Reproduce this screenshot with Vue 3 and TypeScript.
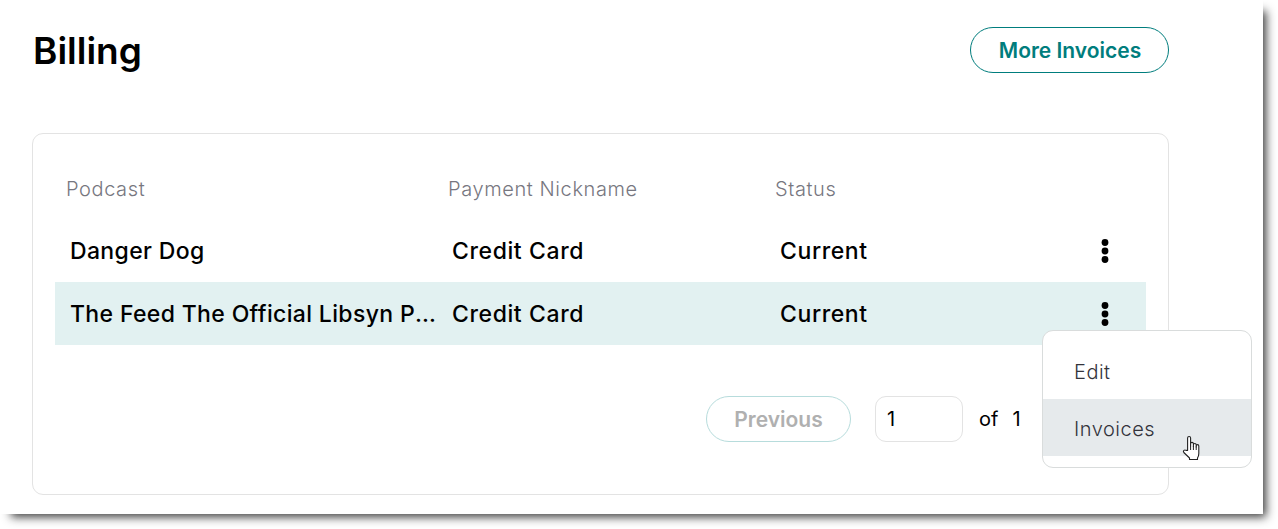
<script setup lang="ts">
interface Row { podcast: string; payment: string; status: string; active: boolean }
const rows: Row[] = [
  { podcast: 'Danger Dog', payment: 'Credit Card', status: 'Current', active: false },
  { podcast: 'The Feed The Official Libsyn Podcast', payment: 'Credit Card', status: 'Current', active: true },
]
</script>

<template>
  <div class="page">
    <div class="frame">
      <header class="top">
        <h1 class="title">Billing</h1>
        <button class="btn primary">More Invoices</button>
      </header>
      <section class="card">
        <div class="grid head">
          <div>Podcast</div>
          <div>Payment Nickname</div>
          <div>Status</div>
        </div>
        <div v-for="r in rows" :key="r.podcast" class="grid row" :class="{ active: r.active }">
          <div class="name">{{ r.podcast }}</div>
          <div class="cell">{{ r.payment }}</div>
          <div class="cell status">{{ r.status }}</div>
          <svg class="dots" width="10" height="24" viewBox="0 0 10 24">
            <circle cx="5" cy="3.5" r="3.4" />
            <circle cx="5" cy="12" r="3.4" />
            <circle cx="5" cy="20.5" r="3.4" />
          </svg>
        </div>
        <div class="pager">
          <button class="btn disabled">Previous</button>
          <div class="page-input">1</div>
          <span class="of">of</span>
          <span class="total">1</span>
        </div>
      </section>
      <div class="menu">
        <div class="item">Edit</div>
        <div class="item hover">
          Invoices
          <svg class="hand" width="20" height="26" viewBox="0 0 20 26">
            <path d="M5.6 15.5V3a1.5 1.5 0 0 1 3 0v8l0-2.2a1.4 1.4 0 0 1 2.8 0V11.5l0-1.6a1.4 1.4 0 0 1 2.8 0v2l0-1a1.3 1.3 0 0 1 2.6 0v7.6c0 2.200-.6 3.300-1.300 4.500v1.500H7.500v-1.500L1.800 17.500c-1.200-1.500.8-3.300 2.200-2.100z" fill="#fff" stroke="#222" stroke-width="1.100" stroke-linejoin="round" />
            <path d="M8.600 11v4M11.400 11v4M14.200 11.500V15" stroke="#222" stroke-width="1" fill="none" />
          </svg>
        </div>
      </div>
    </div>
  </div>
</template>

<style scoped>
.page {
  width: 1278px;
  height: 529px;
  overflow: hidden;
}
.frame {
  position: relative;
  box-sizing: border-box;
  width: 1263px;
  height: 514px;
  padding: 27px 94px 0 32px;
  background: #fff;
  box-shadow: 7px 7px 9px -4px rgba(50, 50, 50, 0.95);
  font-family: Inter, "Liberation Sans", sans-serif;
  color: #000;
}
.top {
  display: flex;
  justify-content: space-between;
  align-items: center;
  height: 46px;
}
.title {
  margin: 0 0 0 1px;
  font-size: 37px;
  font-weight: 600;
}
.btn {
  box-sizing: border-box;
  height: 46px;
  border-radius: 23px;
  background: #fff;
  font-family: inherit;
  font-size: 21px;
  font-weight: 600;
  padding: 0;
}
.primary {
  width: 199px;
  padding-left: 1px;
  border: 1px solid #007d7d;
  color: #007d7d;
}
.disabled {
  width: 145px;
  border: 1px solid #b7dcdc;
  color: #b0b0b0;
}
.card {
  box-sizing: border-box;
  height: 362px;
  margin-top: 60px;
  padding: 33px 22px 0;
  border: 1px solid #e3e3e3;
  border-radius: 11px;
}
.grid {
  display: grid;
  grid-template-columns: 382px 327px 1fr;
  align-items: center;
}
.head {
  height: 44px;
  margin-bottom: 8px;
  padding-left: 11px;
  font-size: 20px;
  font-weight: 300;
  letter-spacing: 0.6px;
  color: #77777f;
}
.row {
  position: relative;
  box-sizing: border-box;
  height: 63px;
  padding: 1px 0 0 15px;
  font-size: 23px;
  font-weight: 500;
  letter-spacing: 0.35px;
}
.row.active { background: #e2f1f1; }
.cell { letter-spacing: 0.6px; }
.status { padding-left: 1px; }
.name {
  overflow: hidden;
  white-space: nowrap;
  text-overflow: ellipsis;
  padding-right: 14px;
}
.dots {
  position: absolute;
  right: 36px;
  top: 20px;
  fill: #000;
}
.pager {
  display: flex;
  align-items: center;
  margin-top: 51px;
  margin-left: 651px;
}
.page-input {
  box-sizing: border-box;
  width: 88px;
  height: 46px;
  margin-left: 24px;
  padding-left: 11px;
  border: 1px solid #e3e3e3;
  border-radius: 11px;
  font-size: 20px;
  line-height: 44px;
}
.of, .total { font-size: 20px; }
.of { margin-left: 16px; }
.total { margin-left: 14px; }
.menu {
  position: absolute;
  left: 1042px;
  top: 330px;
  box-sizing: border-box;
  width: 210px;
  height: 138px;
  padding: 11px 0;
  background: #fff;
  border: 1px solid #d9dcdc;
  border-radius: 11px;
  font-size: 20px;
  font-weight: 300;
  letter-spacing: 0.5px;
  color: #33333b;
}
.item {
  position: relative;
  height: 57px;
  padding-left: 31px;
  line-height: 61px;
}
.item.hover { background: #e6eaec; }
.hand {
  position: absolute;
  left: 139px;
  top: 36px;
}
</style>

<style>
html, body { background: #fff; }
</style>
